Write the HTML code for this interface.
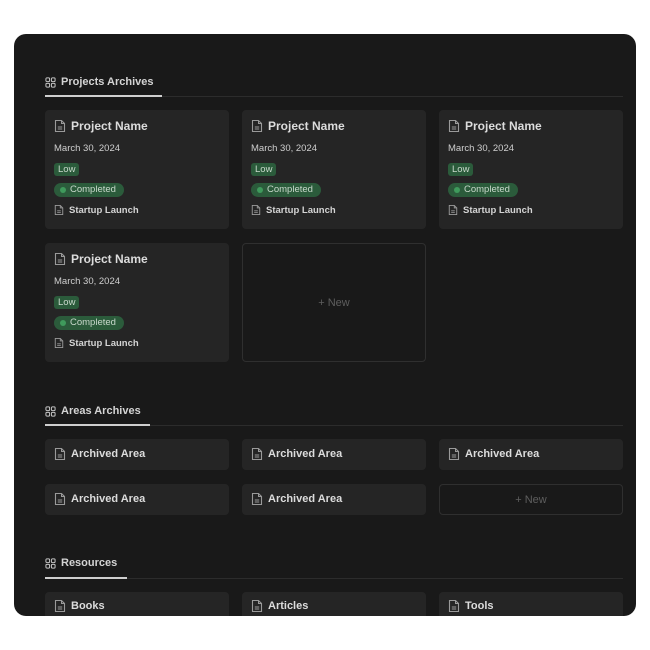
<!DOCTYPE html>
<html><head><style>
*{margin:0;padding:0;box-sizing:border-box}
body{width:650px;height:650px;background:#fff;position:relative;overflow:hidden;font-family:"Liberation Sans",sans-serif;}
.panel{position:absolute;left:14px;top:34px;width:622px;height:582px;background:#191919;border-radius:12px;overflow:hidden}
.hdr{position:absolute;left:31px;font-size:11px;font-weight:bold;color:#d4d4d4;display:flex;align-items:center;gap:5px}
.line{position:absolute;left:31px;width:578px;height:1px;background:#2c2c2c}
.tab{position:absolute;left:31px;height:2px;background:#cfcfcf}
.card{position:absolute;background:#252525;border-radius:4px;width:184px}
.t{position:absolute;left:9px;display:flex;align-items:center;gap:5px;color:#dcdcdc;font-weight:bold;font-size:12px;white-space:nowrap}
.d{position:absolute;left:9px;font-size:9.5px;color:#cfcfcf}
.low{position:absolute;left:9px;background:#2b5b3b;color:#c9d9cc;font-size:9.5px;padding:0 4px;height:13px;line-height:13px;border-radius:3px}
.comp{position:absolute;left:9px;background:#2b5b3b;color:#c9d9cc;font-size:9.5px;height:14px;line-height:14px;border-radius:7px;padding:0 6px 0 16px;width:70px}
.comp:before{content:"";position:absolute;left:6px;top:4px;width:6px;height:6px;border-radius:50%;background:#3f9a5c}
.s{position:absolute;left:9px;display:flex;align-items:center;gap:5px;color:#d4d4d4;font-weight:bold;font-size:9.5px}
.new{position:absolute;border:1px solid #2f2f2f;border-radius:4px;color:#5e5e5e;font-size:11px;display:flex;align-items:center;justify-content:center}
</style></head><body>
<div class="panel">
<svg width="0" height="0" style="position:absolute"><defs>
<symbol id="doc" viewBox="0 0 12 14"><path d="M1.5 1.5h6l3 3v8h-9z" fill="none" stroke="#9a9a9a" stroke-width="1.1"/><path d="M7.5 1.5v3h3M3.8 8h4.4M3.8 10h4.4" fill="none" stroke="#9a9a9a" stroke-width="1"/></symbol>
<symbol id="grid" viewBox="0 0 12 12"><g fill="none" stroke="#c4c4c4" stroke-width="1.1"><rect x="1" y="1" width="4" height="4" rx="1"/><rect x="7" y="1" width="4" height="4" rx="1"/><rect x="1" y="7" width="4" height="4" rx="1"/><rect x="7" y="7" width="4" height="4" rx="1"/></g></symbol>
</defs></svg>

<div class="hdr" style="top:42px"><svg width="11" height="11"><use href="#grid"/></svg>Projects Archives</div>
<div class="line" style="top:62px"></div><div class="tab" style="top:61px;width:117px"></div>

<div class="card" style="left:31px;top:76px;height:119px">
<div class="t" style="top:9px"><svg width="12" height="14"><use href="#doc"/></svg>Project Name</div>
<div class="d" style="top:33px">March 30, 2024</div><div class="low" style="top:53px">Low</div><div class="comp" style="top:73px">Completed</div>
<div class="s" style="top:94px"><svg width="10" height="12"><use href="#doc"/></svg>Startup Launch</div></div>
<div class="card" style="left:228px;top:76px;height:119px">
<div class="t" style="top:9px"><svg width="12" height="14"><use href="#doc"/></svg>Project Name</div>
<div class="d" style="top:33px">March 30, 2024</div><div class="low" style="top:53px">Low</div><div class="comp" style="top:73px">Completed</div>
<div class="s" style="top:94px"><svg width="10" height="12"><use href="#doc"/></svg>Startup Launch</div></div>
<div class="card" style="left:425px;top:76px;height:119px">
<div class="t" style="top:9px"><svg width="12" height="14"><use href="#doc"/></svg>Project Name</div>
<div class="d" style="top:33px">March 30, 2024</div><div class="low" style="top:53px">Low</div><div class="comp" style="top:73px">Completed</div>
<div class="s" style="top:94px"><svg width="10" height="12"><use href="#doc"/></svg>Startup Launch</div></div>
<div class="card" style="left:31px;top:209px;height:119px">
<div class="t" style="top:9px"><svg width="12" height="14"><use href="#doc"/></svg>Project Name</div>
<div class="d" style="top:33px">March 30, 2024</div><div class="low" style="top:53px">Low</div><div class="comp" style="top:73px">Completed</div>
<div class="s" style="top:94px"><svg width="10" height="12"><use href="#doc"/></svg>Startup Launch</div></div>
<div class="new" style="left:228px;top:209px;width:184px;height:119px">+&nbsp;New</div>

<div class="hdr" style="top:371px"><svg width="11" height="11"><use href="#grid"/></svg>Areas Archives</div>
<div class="line" style="top:391px"></div><div class="tab" style="top:390px;width:105px"></div>

<div class="card" style="left:31px;top:405px;height:31px"><div class="t" style="top:8px;font-size:11px"><svg width="12" height="14"><use href="#doc"/></svg>Archived Area</div></div>
<div class="card" style="left:228px;top:405px;height:31px"><div class="t" style="top:8px;font-size:11px"><svg width="12" height="14"><use href="#doc"/></svg>Archived Area</div></div>
<div class="card" style="left:425px;top:405px;height:31px"><div class="t" style="top:8px;font-size:11px"><svg width="12" height="14"><use href="#doc"/></svg>Archived Area</div></div>
<div class="card" style="left:31px;top:450px;height:31px"><div class="t" style="top:8px;font-size:11px"><svg width="12" height="14"><use href="#doc"/></svg>Archived Area</div></div>
<div class="card" style="left:228px;top:450px;height:31px"><div class="t" style="top:8px;font-size:11px"><svg width="12" height="14"><use href="#doc"/></svg>Archived Area</div></div>
<div class="new" style="left:425px;top:450px;width:184px;height:31px">+&nbsp;New</div>

<div class="hdr" style="top:523px"><svg width="11" height="11"><use href="#grid"/></svg>Resources</div>
<div class="line" style="top:544px"></div><div class="tab" style="top:543px;width:82px"></div>

<div class="card" style="left:31px;top:558px;height:40px"><div class="t" style="top:7px;font-size:11px"><svg width="12" height="14"><use href="#doc"/></svg>Books</div></div>
<div class="card" style="left:228px;top:558px;height:40px"><div class="t" style="top:7px;font-size:11px"><svg width="12" height="14"><use href="#doc"/></svg>Articles</div></div>
<div class="card" style="left:425px;top:558px;height:40px"><div class="t" style="top:7px;font-size:11px"><svg width="12" height="14"><use href="#doc"/></svg>Tools</div></div>
</div>
</body></html>
